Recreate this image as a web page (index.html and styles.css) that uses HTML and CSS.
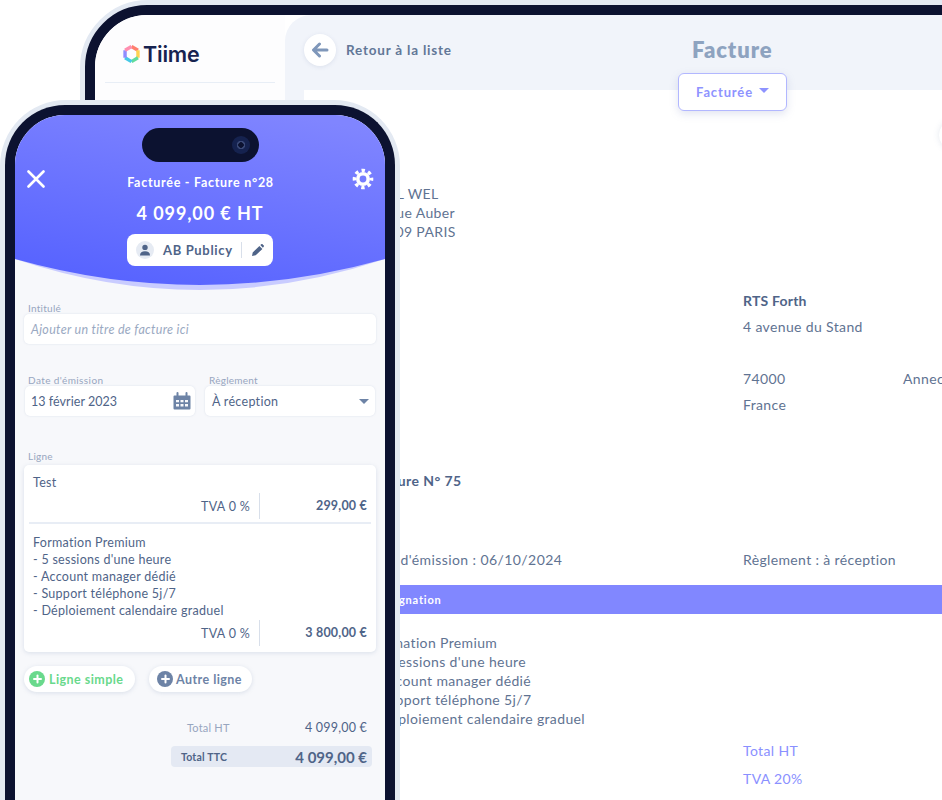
FILE: index.html
```html
<!DOCTYPE html>
<html lang="fr">
<head>
<meta charset="utf-8">
<title>Tiime - Facture</title>
<link rel="stylesheet" href="styles.css">
</head>
<body>
<div class="stage">
  <section class="tablet">
    <div class="tablet-bezel">
      <aside class="side">
        <div class="logo">
          <svg class="logo-mark" viewBox="0 0 20 22" width="19" height="21" fill="none" stroke-width="3.6">
            <path d="M10 2.5 16.8 6.5" stroke="#ff7f6e"/>
            <path d="M16.8 6.5V14.5" stroke="#ffd24f"/>
            <path d="M16.8 14.5 10 18.5" stroke="#62dc9c"/>
            <path d="M10 18.5 3.2 14.5" stroke="#46c9e6"/>
            <path d="M3.2 14.5V6.5" stroke="#8f8cff"/>
            <path d="M3.2 6.5 10 2.5" stroke="#ff8fb0"/>
          </svg>
          <span class="logo-text">Tiime</span>
        </div>
        <div class="side-rule"></div>
      </aside>
      <main class="main">
        <header class="main-head">
          <div class="back">
            <span class="back-btn">
              <svg viewBox="0 0 18 16" width="18" height="16" fill="none" stroke="#7f97ba" stroke-width="3" stroke-linecap="round" stroke-linejoin="round"><path d="M16 8H3M8.5 2 2.5 8l6 6"/></svg>
            </span>
            <span class="back-text">Retour à la liste</span>
          </div>
          <h1 class="head-title">Facture</h1>
          <div class="status">Facturée<span class="status-caret"></span></div>
          <span class="edge-btn"></span>
        </header>
        <article class="doc">
          <div class="seller">
            <div>SARL WEL</div>
            <div>12 rue Auber</div>
            <div>75009 PARIS</div>
          </div>
          <div class="client">
            <div class="strong">RTS Forth</div>
            <div>4 avenue du Stand</div>
            <div class="blank"></div>
            <div class="city"><span class="zip">74000</span><span>Annecy</span></div>
            <div class="country">France</div>
          </div>
          <h2 class="doc-title">Facture N° 75</h2>
          <div class="meta"><span class="meta-date">Date d'émission : 06/10/2024</span><span>Règlement : à réception</span></div>
          <div class="bar">Désignation</div>
          <div class="desc">
            <div>Formation Premium</div>
            <div>- 5 sessions d'une heure</div>
            <div>- Account manager dédié</div>
            <div>- Support téléphone 5j/7</div>
            <div>- Déploiement calendaire graduel</div>
          </div>
          <div class="doc-totals">
            <div>Total HT</div>
            <div>TVA 20%</div>
          </div>
        </article>
      </main>
    </div>
  </section>

  <section class="phone">
    <div class="phone-bezel">
      <div class="screen">
        <header class="phead">
          <svg class="phead-bg" viewBox="0 0 370 176" width="370" height="176" preserveAspectRatio="none">
            <defs>
              <linearGradient id="hg" x1="0.75" y1="0" x2="0.35" y2="1">
                <stop offset="0" stop-color="#8085ff"/>
                <stop offset="1" stop-color="#5864ff"/>
              </linearGradient>
            </defs>
            <path d="M0 144Q185 206 370 144V0H0Z" fill="#c9ccff"/>
            <path d="M0 0H370V144Q185 196 0 144Z" fill="url(#hg)"/>
          </svg>
          <div class="island"><span class="camera"></span></div>
          <div class="ptop">
            <svg class="close-icon" viewBox="0 0 18 18" width="18" height="18" fill="none" stroke="#fff" stroke-width="2.6" stroke-linecap="round"><path d="M1.5 1.5l15 15M16.5 1.5l-15 15"/></svg>
            <div class="ptitle">Facturée - Facture n°28</div>
            <svg viewBox="0 0 22 22" width="22" height="22" fill="none" stroke="#fff"><circle cx="11" cy="11" r="5.2" stroke-width="3.6"/><circle cx="11" cy="11" r="8.6" stroke-width="3.4" stroke-dasharray="3.4 3.35" stroke-dashoffset="1.7"/></svg>
          </div>
          <div class="pamount">4 099,00 € HT</div>
          <div class="chip">
            <span class="avatar">
              <svg viewBox="0 0 12 12" width="12" height="12" fill="#4f6488"><circle cx="6" cy="3.4" r="2.7"/><path d="M1 11.5c0-3 2-4.3 5-4.3s5 1.3 5 4.3z"/></svg>
            </span>
            <span class="chip-name">AB Publicy</span>
            <span class="chip-rule"></span>
            <svg viewBox="0 0 12 12" width="12" height="12" fill="#4f6488"><path d="M0 12l.7-3.4L7.4 1.9l3 3-6.7 6.4zM8.3 1l1-.8c.4-.3.9-.3 1.2 0l1.3 1.3c.3.3.3.8 0 1.1l-.9 1.1z"/></svg>
          </div>
        </header>

        <div class="form">
          <label class="field-label first">Intitulé</label>
          <div class="input placeholder">Ajouter un titre de facture ici</div>

          <div class="two">
            <div>
              <label class="field-label date-label">Date d'émission</label>
              <div class="input date-input">
                <span>13 février 2023</span>
                <svg viewBox="0 0 18 18" width="18" height="18"><path d="M1.5 3.5h15a1 1 0 0 1 1 1v12a1 1 0 0 1-1 1h-15a1 1 0 0 1-1-1v-12a1 1 0 0 1 1-1z" fill="#6d83a6"/><path d="M4.5 1v4M13.5 1v4" stroke="#6d83a6" stroke-width="2" stroke-linecap="round"/><path d="M3 8h3v2.2H3zM7.5 8h3v2.2h-3zM12 8h3v2.2h-3zM3 12h3v2.6H3zM7.5 12h3v2.6h-3zM12 12h3v2.6h-3z" fill="#f7f8fb"/></svg>
              </div>
            </div>
            <div>
              <label class="field-label">Règlement</label>
              <div class="input">
                <span>À réception</span>
                <span class="select-caret"></span>
              </div>
            </div>
          </div>

          <label class="field-label ligne">Ligne</label>
          <div class="card">
            <div class="line-text">Test</div>
            <div class="line-row">
              <span class="line-tva">TVA 0 %</span>
              <span class="line-amount">299,00 €</span>
            </div>
            <div class="line-sep"></div>
            <div class="line-text">
              <div>Formation Premium</div>
              <div>- 5 sessions d'une heure</div>
              <div>- Account manager dédié</div>
              <div>- Support téléphone 5j/7</div>
              <div>- Déploiement calendaire graduel</div>
            </div>
            <div class="line-row line-row-last">
              <span class="line-tva">TVA 0 %</span>
              <span class="line-amount">3 800,00 €</span>
            </div>
          </div>

          <div class="adds">
            <div class="add add-green"><span class="plus"></span>Ligne simple</div>
            <div class="add add-grey"><span class="plus"></span>Autre ligne</div>
          </div>

          <div class="totals">
            <div class="total-ht"><span class="total-ht-label">Total HT</span><span>4 099,00 €</span></div>
            <div class="total-ttc"><span class="total-ttc-label">Total TTC</span><span class="total-ttc-value">4 099,00 €</span></div>
          </div>
        </div>
      </div>
    </div>
  </section>
</div>
</body>
</html>
```

FILE: styles.css
```css
* { box-sizing: border-box; }
html, body { margin: 0; padding: 0; background: #fff; }
body { font-family: "Lato", "Open Sans", sans-serif; color: #4f6488; }
h1, h2 { margin: 0; }

.stage { position: relative; width: 942px; height: 800px; overflow: hidden; background: #fff; }

/* tablet */
.tablet { position: absolute; left: 80px; top: 0; width: 1000px; height: 960px; border: 5px solid #e3e9f2; border-radius: 68px; background: #e3e9f2; }
.tablet-bezel { display: flex; height: 100%; border: 10px solid #0c1230; border-radius: 62px; background: #fff; overflow: hidden; }
.side { flex: 0 0 190px; padding: 27px 10px 0; background: #fdfdfe; }
.logo { display: flex; align-items: center; gap: 2px; padding-left: 17px; height: 24px; }
.logo-mark { flex: none; }
.logo-text { font-size: 21.5px; font-weight: 600; color: #172350; font-family: "Inter", sans-serif; letter-spacing: -0.2px; line-height: 24px; }
.side-rule { height: 1px; margin-top: 16px; background: #e8eef6; }
.main { flex: 1; min-width: 0; background: #f1f4fa; border-top-left-radius: 26px; display: flex; flex-direction: column; }
.main-head { position: relative; flex: 0 0 75px; }
.back { display: flex; align-items: center; gap: 10px; padding: 19px 0 0 19px; }
.back-btn { display: flex; align-items: center; justify-content: center; width: 32px; height: 32px; border-radius: 50%; background: #fff; box-shadow: 0 1px 4px rgba(120,140,175,.18); }
.back-text { font-size: 13.5px; font-weight: 700; color: #627797; letter-spacing: .8px; }
.head-title { position: absolute; left: 407px; top: 20px; font-size: 22px; line-height: 30px; font-weight: 800; color: #8ea3c0; letter-spacing: .9px; }
.status { position: absolute; left: 393px; top: 58px; width: 109px; height: 38px; display: flex; align-items: center; justify-content: center; gap: 6px; padding-bottom: 1px; background: #fff; border: 1.5px solid #b2b7ff; border-radius: 6px; box-shadow: 0 3px 8px rgba(120,130,190,.22); font-size: 13px; font-weight: 700; color: #8e93ff; letter-spacing: .85px; z-index: 1; }
.status-caret { width: 0; height: 0; border-left: 5px solid transparent; border-right: 5px solid transparent; border-top: 5px solid #8e93ff; margin-bottom: 2px; }
.edge-btn { position: absolute; left: 654px; top: 105px; width: 30px; height: 30px; border-radius: 50%; background: #fff; box-shadow: 0 0 6px rgba(120,140,175,.2); z-index: 1; }

.doc { flex: 1; margin-left: 19px; background: #fff; padding: 94px 0 0 66px; font-size: 14px; line-height: 19px; color: #5f7392; letter-spacing: .36px; }
.client { margin: 47px 0 0 373px; line-height: 26px; }
.client .strong { font-weight: 700; color: #4f6488; letter-spacing: .2px; }
.blank { height: 26px; }
.city { display: flex; }
.zip { width: 160px; }
.country { line-height: 25px; }
.doc-title { margin-top: 54px; font-size: 14px; line-height: 19px; font-weight: 700; color: #4f6488; letter-spacing: .42px; }
.meta { display: flex; margin: 60px 0 0 -5px; }
.meta-date { width: 378px; letter-spacing: .42px; }
.bar { margin: 16px 0 0 -66px; height: 29px; padding-left: 70px; background: #8187ff; color: #fff; font-size: 11px; line-height: 29px; font-weight: 700; letter-spacing: .8px; }
.desc { margin-top: 19px; }
.doc-totals { margin: 9px 0 0 373px; line-height: 28px; color: #8a90ff; }

/* phone */
.phone { position: absolute; left: 0; top: 100px; width: 400px; height: 800px; border: 5px solid #e3e9f2; border-bottom: 0; border-radius: 66px 66px 0 0; background: #e3e9f2; }
.phone-bezel { height: 100%; border: 10px solid #0c1230; border-bottom: 0; border-radius: 60px 60px 0 0; background: #f7f8fb; overflow: hidden; }
.screen { position: relative; height: 100%; }
.phead { position: relative; height: 175px; padding-top: 53px; text-align: center; }
.phead-bg { position: absolute; left: 0; top: 0; }
.island { position: absolute; left: 127px; top: 13px; width: 117px; height: 34px; border-radius: 17px; background: #0c1230; }
.camera { position: absolute; left: 90px; top: 8px; width: 18px; height: 18px; border-radius: 50%; background: radial-gradient(circle, #0c1230 0 2.5px, #3b4a78 3px 4px, #15224f 4.5px); }
.ptop { position: relative; display: flex; align-items: flex-start; justify-content: space-between; padding: 0 11px 0 12px; height: 26px; }
.close-icon { margin-top: 2px; }
.ptitle { margin: 7px 0 0 4px; font-size: 12.5px; line-height: 16px; font-weight: 700; color: #fff; letter-spacing: .72px; }
.pamount { position: relative; margin-top: 7px; font-size: 18px; line-height: 24px; font-weight: 700; color: #fff; letter-spacing: .9px; }
.chip { position: relative; display: flex; align-items: center; width: 146px; height: 32px; margin: 9px auto 0; padding-left: 9px; background: #fff; border-radius: 8px; }
.avatar { display: flex; align-items: center; justify-content: center; width: 18px; height: 18px; border-radius: 50%; background: #e6ebf3; }
.chip-name { margin-left: 9px; width: 69px; font-size: 13px; line-height: 16px; font-weight: 700; color: #4f6488; letter-spacing: .65px; white-space: nowrap; text-align: left; }
.chip-rule { width: 1px; height: 16px; margin: 0 10px 0 9px; background: #d8dfea; }

.form { padding: 0 9px; font-size: 12.5px; }
.field-label { display: block; font-size: 10px; line-height: 13px; margin-bottom: -1px; color: #97a6c0; padding-left: 4px; letter-spacing: .25px; }
.first { margin-top: 12px; }
.input { display: flex; align-items: center; justify-content: space-between; height: 30px; padding: 0 7px; background: #fff; border-radius: 5px; box-shadow: 0 0 2px rgba(130,150,185,.25); font-size: 12.5px; letter-spacing: .3px; color: #4f6488; }
.input.placeholder { font-style: italic; color: #9aa9c2; }
.two { display: grid; grid-template-columns: 170px 170px; column-gap: 10px; margin: 30px 1px 0; }
.two .input svg { margin-right: -3px; }
.date-label { padding-left: 3px; letter-spacing: .4px; }
.date-input { padding-left: 6px; letter-spacing: .05px; }
.select-caret { width: 0; height: 0; margin-right: -1px; border-left: 5px solid transparent; border-right: 5px solid transparent; border-top: 5px solid #6d83a6; }
.ligne { margin-top: 34px; }
.card { margin-top: 3px; height: 187px; padding: 9px 5px 0; background: #fff; border-radius: 5px; box-shadow: 0 1px 4px rgba(130,150,185,.25); }
.line-text { padding-left: 4px; font-size: 12.5px; line-height: 17px; color: #4f6488; letter-spacing: .28px; }
.line-row { display: flex; align-items: center; justify-content: flex-end; height: 26px; margin-top: 2px; font-size: 12.5px; }
.line-row-last { margin-top: 1px; }
.line-tva { padding-right: 9px; letter-spacing: .3px; }
.line-amount { width: 112px; height: 100%; padding-right: 4px; border-left: 1px solid #d8dfea; line-height: 26px; text-align: right; font-weight: 700; letter-spacing: .2px; }
.line-sep { height: 2px; margin: 3px 0 10px; background: #e8edf5; }

.adds { display: flex; gap: 14px; margin-top: 14px; }
.add { display: flex; align-items: center; height: 26px; border-radius: 13px; background: #fff; box-shadow: 0 1px 4px rgba(130,150,185,.25); font-size: 12.5px; font-weight: 700; letter-spacing: .45px; white-space: nowrap; }
.add-green { width: 111px; padding-left: 5px; gap: 4px; color: #69d98c; }
.add-grey { width: 103px; padding-left: 8px; gap: 3px; color: #6d83a6; }
.plus { position: relative; flex: none; width: 16px; height: 16px; border-radius: 50%; background: currentColor; }
.plus::before, .plus::after { content: ""; position: absolute; left: 3.5px; top: 7px; width: 9px; height: 2px; background: #fff; border-radius: 1px; }
.plus::after { transform: rotate(90deg); }

.totals { margin: 27px 4px 0 147px; }
.total-ht { display: flex; justify-content: space-between; padding: 0 5px 0 16px; height: 18px; line-height: 18px; font-size: 12.5px; letter-spacing: .2px; }
.total-ht-label { font-size: 11px; color: #97a6c0; }
.total-ttc { display: flex; align-items: center; justify-content: space-between; height: 21px; margin-top: 9px; padding: 0 5px 0 10px; background: #e4e9f3; border-radius: 4px; }
.total-ttc-label { font-size: 10.5px; font-weight: 700; letter-spacing: .2px; }
.total-ttc-value { font-size: 15px; font-weight: 700; letter-spacing: 0; }
```
